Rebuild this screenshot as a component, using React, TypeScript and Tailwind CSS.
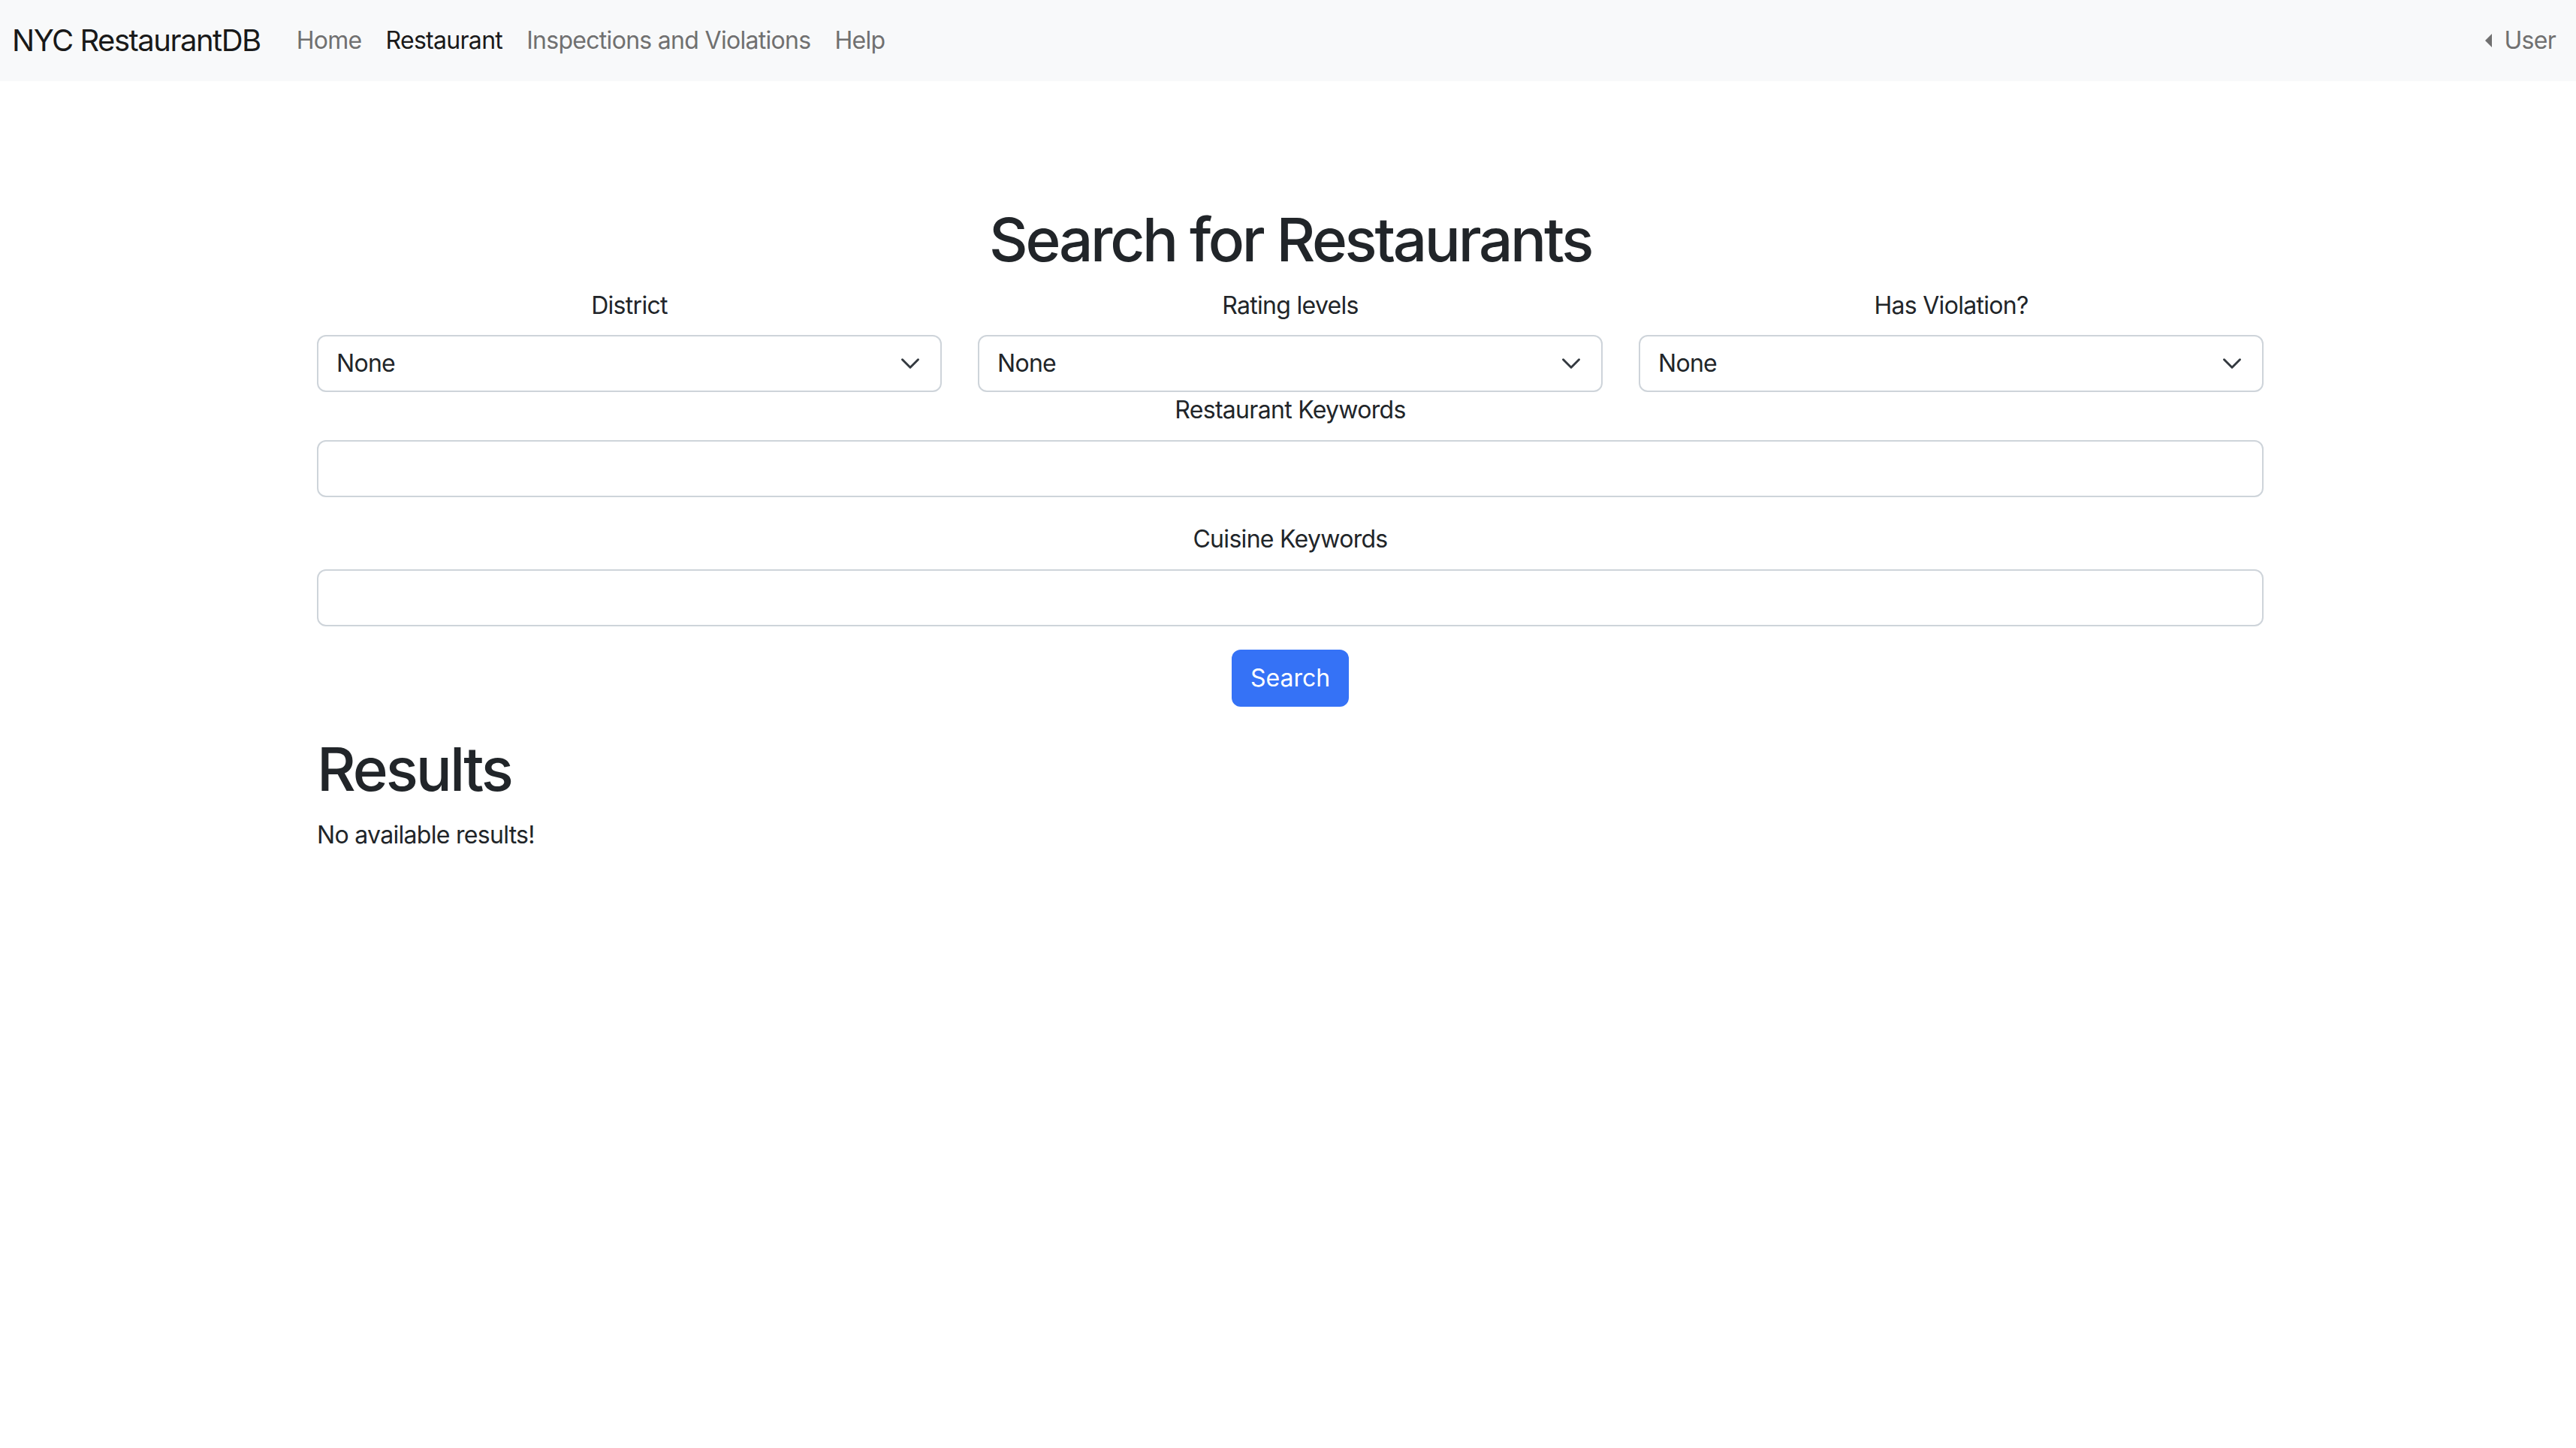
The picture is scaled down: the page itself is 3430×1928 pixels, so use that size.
import React from 'react';

const navLinks = [
  { label: 'Home', active: false },
  { label: 'Restaurant', active: true },
  { label: 'Inspections and Violations', active: false },
  { label: 'Help', active: false },
];

const filters = ['District', 'Rating levels', 'Has Violation?'];

function Chevron() {
  return (
    <svg width="28" height="28" viewBox="0 0 16 16" fill="none" className="shrink-0">
      <path d="m2 5 6 6 6-6" stroke="#343a40" strokeWidth="1.7" strokeLinecap="round" strokeLinejoin="round" />
    </svg>
  );
}

function FakeSelect() {
  return (
    <div className="h-[76px] w-full border-2 border-[#ced4da] rounded-[12px] bg-white flex items-center justify-between pl-[24px] pr-[26px] text-[32px] leading-[48px]">
      <span>None</span>
      <Chevron />
    </div>
  );
}

export default function App() {
  return (
    <div className="min-h-screen bg-white text-[#212529] tracking-[-0.7px] font-['Inter','Noto_Sans',sans-serif]">
      <nav className="h-[108px] bg-[#f8f9fa] flex items-center pl-[16px] pr-[27px]">
        <a className="text-[40px] leading-[60px] tracking-[-1.5px] text-[#191919] mr-[32px]">NYC RestaurantDB</a>
        <ul className="flex items-center">
          {navLinks.map((l) => (
            <li key={l.label}>
              <a className={`block px-[16px] text-[32px] leading-[48px] ${l.active ? 'text-[#191919]' : 'text-[#707070]'}`}>
                {l.label}
              </a>
            </li>
          ))}
        </ul>
        <div className="ml-auto flex items-center text-[32px] leading-[48px] text-[#707070]">
          <span className="w-0 h-0 border-y-[9px] border-y-transparent border-r-[9px] border-r-[#707070] mr-[16px]" />
          <span>User</span>
        </div>
      </nav>

      <main className="w-[2592px] ml-[calc(50%-1293px)] pt-[163px]">
        <h1 className="text-center text-[80px] leading-[96px] tracking-[-3.3px] font-medium mb-[16px]">Search for Restaurants</h1>

        <div className="grid grid-cols-3 gap-x-[48px]">
          {filters.map((f) => (
            <div key={f}>
              <label className="block text-center text-[32px] leading-[48px] mb-[15px]">{f}</label>
              <FakeSelect />
            </div>
          ))}
        </div>

        <label className="block text-center text-[32px] leading-[48px] mb-[16px]">Restaurant Keywords</label>
        <input className="block w-full h-[76px] border-2 border-[#ced4da] rounded-[12px] px-[24px] text-[32px] outline-none mb-[32px]" />

        <label className="block text-center text-[32px] leading-[48px] mb-[16px]">Cuisine Keywords</label>
        <input className="block w-full h-[76px] border-2 border-[#ced4da] rounded-[12px] px-[24px] text-[32px] outline-none" />

        <div className="flex justify-center mt-[31px]">
          <button className="h-[76px] px-[25px] rounded-[12px] bg-[#3572f6] text-white text-[32px] leading-[48px] tracking-normal">
            Search
          </button>
        </div>

        <h1 className="mt-[35px] text-[80px] leading-[96px] tracking-[-3px] font-medium mb-[16px]">Results</h1>
        <p className="text-[32px] leading-[48px]">No available results!</p>
      </main>
    </div>
  );
}
